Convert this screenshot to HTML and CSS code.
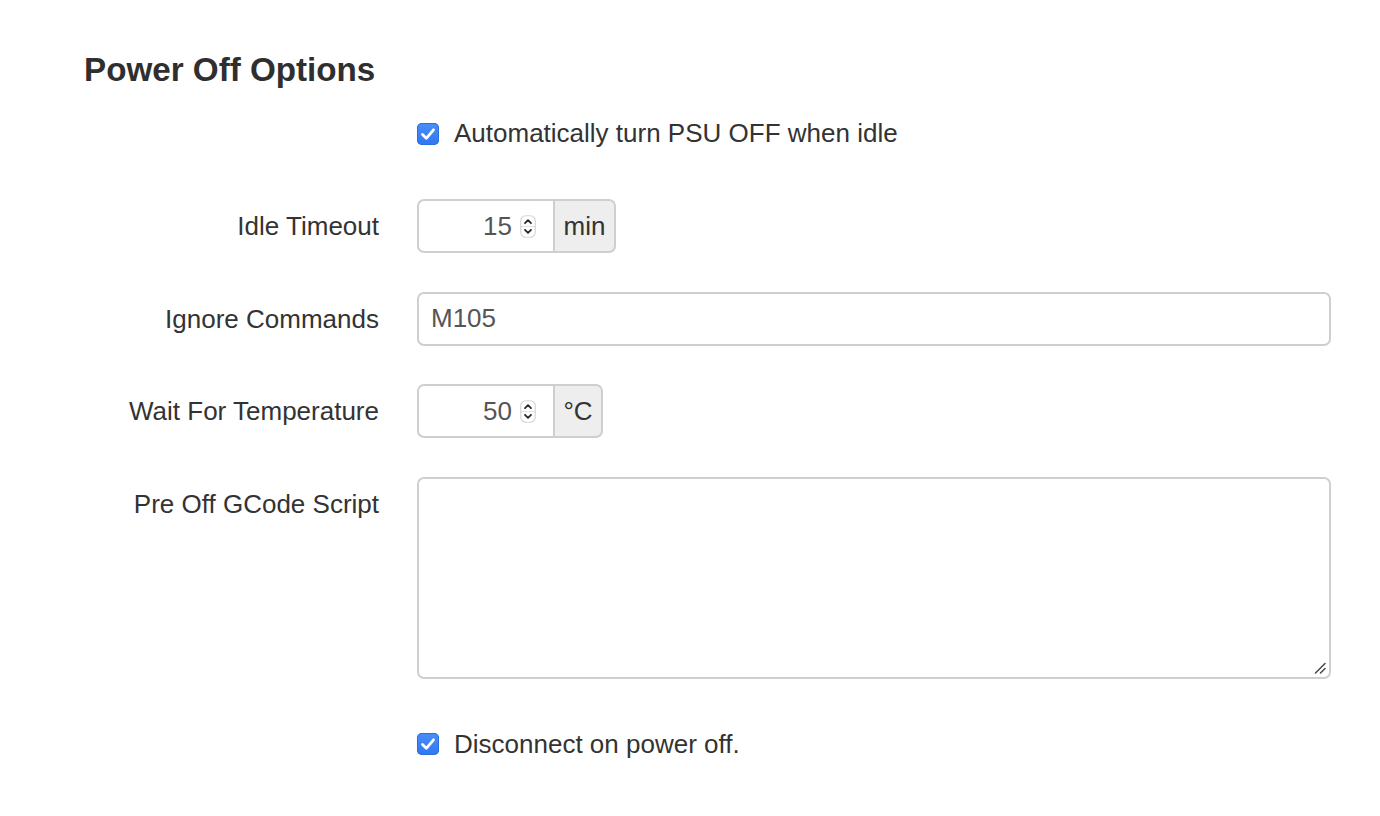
FILE: index.html
```html
<!DOCTYPE html>
<html lang="en">
<head>
<meta charset="utf-8">
<title>Power Off Options</title>
<link rel="stylesheet" href="styles.css">
</head>
<body>
<div class="page">
  <h2 class="title">Power Off Options</h2>
  <form class="form">
    <div class="label"></div>
    <label class="check-row">
      <span class="checkbox"><svg viewBox="0 0 22 22" width="22" height="22"><path d="M5.5 11.5 L9.3 15.3 L16.5 6.8" fill="none" stroke="#fff" stroke-width="2.8" stroke-linecap="round" stroke-linejoin="round"/></svg></span>
      <span class="check-text">Automatically turn PSU OFF when idle</span>
    </label>

    <div class="label">Idle Timeout</div>
    <div class="control">
      <div class="group">
        <div class="num">
          <span class="num-val">15</span>
          <svg class="spin" viewBox="0 0 16 23" width="16" height="23"><rect x="0.75" y="0.75" width="14.5" height="21.5" rx="5" fill="#fff" stroke="#d6d6d6" stroke-width="1.2"/><line x1="1" y1="11.5" x2="15" y2="11.5" stroke="#e2e2e2" stroke-width="1"/><path d="M5 8.2 L8 5.2 L11 8.2" fill="none" stroke="#2a2a2a" stroke-width="1.8" stroke-linecap="round" stroke-linejoin="round"/><path d="M5 14.8 L8 17.8 L11 14.8" fill="none" stroke="#2a2a2a" stroke-width="1.8" stroke-linecap="round" stroke-linejoin="round"/></svg>
        </div>
        <div class="addon">min</div>
      </div>
    </div>

    <div class="label">Ignore Commands</div>
    <div class="control">
      <div class="text-input">M105</div>
    </div>

    <div class="label">Wait For Temperature</div>
    <div class="control">
      <div class="group">
        <div class="num">
          <span class="num-val">50</span>
          <svg class="spin" viewBox="0 0 16 23" width="16" height="23"><rect x="0.75" y="0.75" width="14.5" height="21.5" rx="5" fill="#fff" stroke="#d6d6d6" stroke-width="1.2"/><line x1="1" y1="11.5" x2="15" y2="11.5" stroke="#e2e2e2" stroke-width="1"/><path d="M5 8.2 L8 5.2 L11 8.2" fill="none" stroke="#2a2a2a" stroke-width="1.8" stroke-linecap="round" stroke-linejoin="round"/><path d="M5 14.8 L8 17.8 L11 14.8" fill="none" stroke="#2a2a2a" stroke-width="1.8" stroke-linecap="round" stroke-linejoin="round"/></svg>
        </div>
        <div class="addon addon-c">°C</div>
      </div>
    </div>

    <div class="label">Pre Off GCode Script</div>
    <div class="control">
      <div class="textarea">
        <svg class="grip" viewBox="0 0 12 12" width="12" height="12"><line x1="1.5" y1="11" x2="11" y2="1.5" stroke="#444" stroke-width="1.5" stroke-linecap="round"/><line x1="6.5" y1="11" x2="11" y2="6.5" stroke="#444" stroke-width="1.5" stroke-linecap="round"/></svg>
      </div>
    </div>

    <div class="label"></div>
    <label class="check-row">
      <span class="checkbox"><svg viewBox="0 0 22 22" width="22" height="22"><path d="M5.5 11.5 L9.3 15.3 L16.5 6.8" fill="none" stroke="#fff" stroke-width="2.8" stroke-linecap="round" stroke-linejoin="round"/></svg></span>
      <span class="check-text">Disconnect on power off.</span>
    </label>
  </form>
</div>
</body>
</html>
```

FILE: styles.css
```css
html, body {
  margin: 0;
  padding: 0;
  background: #ffffff;
}

body {
  font-family: "Liberation Sans", Arial, Helvetica, sans-serif;
  color: #333333;
}

.page {
  padding: 50px 49px 0 84px;
}

.title {
  margin: 0 0 16.5px 0;
  font-size: 33.2px;
  line-height: 40px;
  font-weight: bold;
  color: #2f2f2f;
}

.form {
  display: grid;
  grid-template-columns: 295px 914px;
  column-gap: 38px;
  row-gap: 38.5px;
  margin: 0;
}

.label {
  text-align: right;
  font-size: 26px;
  line-height: 54px;
  height: 54px;
  white-space: nowrap;
  color: #333333;
  align-self: start;
}

.control {
  display: flex;
  align-items: flex-start;
}

.check-row {
  display: flex;
  align-items: center;
  height: 54px;
  gap: 15px;
  cursor: default;
}

.checkbox {
  width: 22px;
  height: 22px;
  border-radius: 5px;
  background: linear-gradient(#4a8ef8, #2f77f2);
  box-shadow: inset 0 0 0 1px #2a6ee0;
  display: flex;
  align-items: center;
  justify-content: center;
  flex: none;
}

.checkbox svg {
  display: block;
}

.check-text {
  font-size: 26px;
  color: #333333;
}

.group {
  display: flex;
  height: 54px;
}

.num {
  box-sizing: border-box;
  height: 54px;
  width: 136px;
  border: 2px solid #cfcfcf;
  border-right: none;
  border-radius: 7px 0 0 7px;
  display: flex;
  align-items: center;
  justify-content: flex-end;
  padding-right: 17px;
  gap: 8px;
  background: #fff;
}

.num-val {
  font-size: 26px;
  color: #555555;
}

.spin {
  display: block;
  flex: none;
}

.addon {
  box-sizing: border-box;
  height: 54px;
  width: 63px;
  border: 2px solid #cfcfcf;
  border-radius: 0 7px 7px 0;
  background: #eeeeee;
  display: flex;
  align-items: center;
  justify-content: center;
  font-size: 26px;
  color: #333333;
}

.addon-c {
  width: 50px;
}

.text-input {
  box-sizing: border-box;
  width: 914px;
  height: 54px;
  border: 2px solid #cfcfcf;
  border-radius: 7px;
  padding-left: 12px;
  display: flex;
  align-items: center;
  font-size: 26px;
  color: #555555;
  background: #fff;
}

.textarea {
  box-sizing: border-box;
  width: 914px;
  height: 202px;
  border: 2px solid #cfcfcf;
  border-radius: 7px;
  background: #fff;
  display: flex;
  align-items: flex-end;
  justify-content: flex-end;
  padding: 0 3px 3px 0;
}

.grip {
  display: block;
}
```
